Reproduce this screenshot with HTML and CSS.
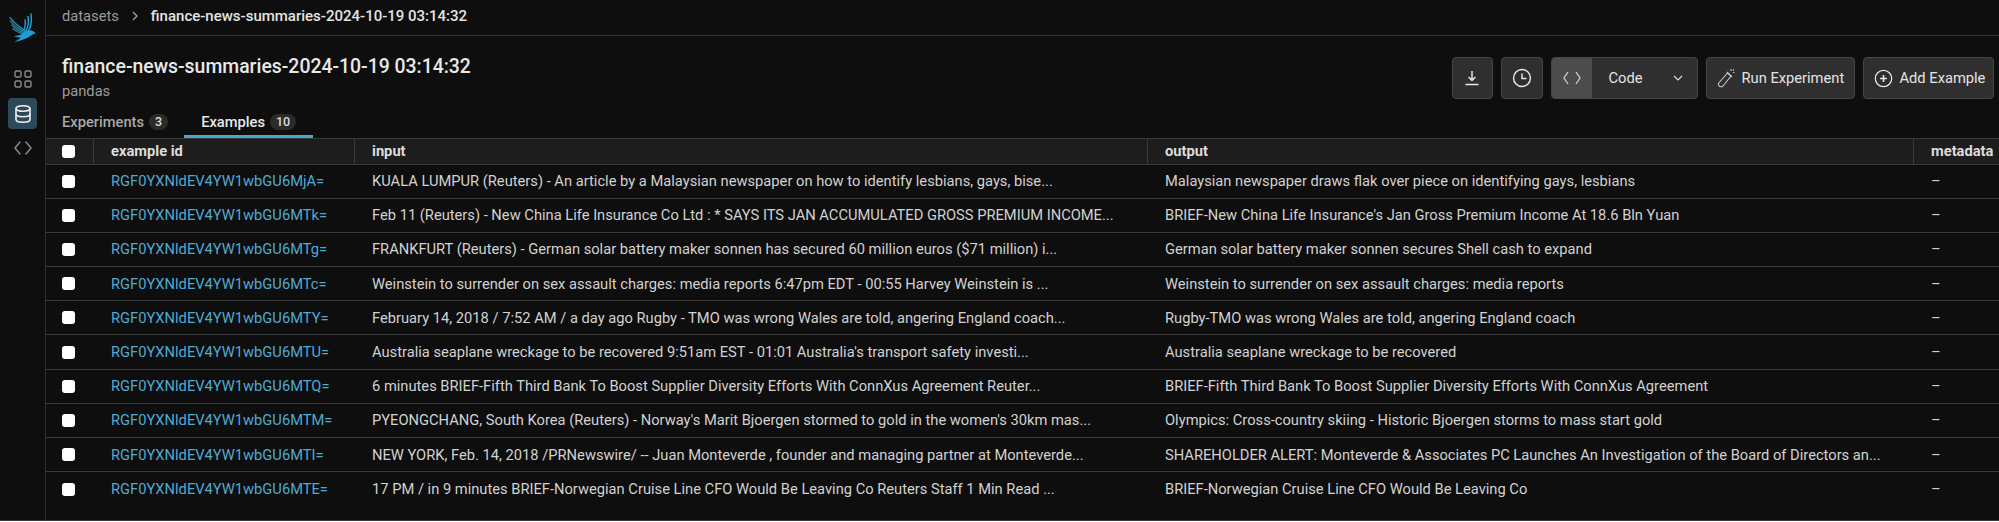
FILE: index.html
```html
<!DOCTYPE html>
<html lang="en">
<head>
<meta charset="utf-8">
<title>finance-news-summaries</title>
<link rel="stylesheet" href="styles.css">
</head>
<body>
<div class="app">
  <nav class="sidebar">
    <svg class="logo" width="28" height="30" viewBox="0 0 28 30" fill="none" stroke-linecap="round">
      <g stroke="#2b86a6" stroke-width="1.300">
        <path d="M1 4.500C5 10 10 14 17 18"/>
        <path d="M1.500 8C5 13 10 16 17 19.500"/>
        <path d="M3 12C6 16 11 18.500 17 20.500"/>
        <path d="M4 16C8 19 12 20.500 17 22"/>
      </g>
      <g stroke="#1c9fd8" stroke-width="1.500">
        <path d="M22 1C23 8 22 14 19 19"/>
        <path d="M19 3.500C20 9 19 14 17 18"/>
        <path d="M16 7C17 11 16 14 15 17"/>
      </g>
      <path d="M17 18C21 16.500 24 17.500 27 20.500C24 20.500 22.500 22.500 20 24C15 26.500 10 28 5 29.500C8 27.500 10 26 12 24.500C9 24.500 7 24 5 23C9 23 13 22 17 18Z" fill="#1c9fd8"/>
    </svg>
    <svg class="nav-icon first" width="20" height="20" viewBox="0 0 20 20" fill="none" stroke="#8a8a8a" stroke-width="1.400"><rect x="2" y="2" width="6" height="6" rx="1.500"/><rect x="12" y="2" width="6" height="6" rx="1.500"/><rect x="2" y="12" width="6" height="6" rx="1.500"/><rect x="12" y="12" width="6" height="6" rx="1.500"/></svg>
    <span class="nav-active">
      <svg width="20" height="20" viewBox="0 0 20 20" fill="none" stroke="#f0f0f0" stroke-width="1.600"><ellipse cx="10" cy="4.500" rx="7" ry="2.700"/><path d="M3 4.500V15.500C3 17 6 18.200 10 18.200S17 17 17 15.500V4.500"/><path d="M3 10C3 11.500 6 12.700 10 12.700S17 11.500 17 10"/></svg>
    </span>
    <svg class="nav-icon" width="20" height="20" viewBox="0 0 20 20" fill="none" stroke="#8a8a8a" stroke-width="1.500" stroke-linecap="round" stroke-linejoin="round"><path d="M7 4L2 10L7 16"/><path d="M13 4L18 10L13 16"/></svg>
  </nav>
  <main class="main">
    <header class="crumbs"><span class="crumb">datasets</span><svg width="10" height="12" viewBox="0 0 10 12" fill="none" stroke="#aaa" stroke-width="1.200"><path d="M3 2L7 6L3 10"/></svg><span class="crumb-current">finance-news-summaries-2024-10-19 03:14:32</span></header>
    <section class="head">
      <div class="head-text">
        <h1 class="title">finance-news-summaries-2024-10-19 03:14:32</h1>
        <div class="sub">pandas</div>
      </div>
      <div class="actions">
        <button class="btn icon-btn"><svg width="18" height="18" viewBox="0 0 18 18" fill="none" stroke="#e8e8e8" stroke-width="1.500"><path d="M9 2V11M5.500 8L9 11.500L12.500 8"/><path d="M2.500 15.500H15.500"/></svg></button>
        <button class="btn icon-btn"><svg width="20" height="20" viewBox="0 0 18 18" fill="none" stroke="#e8e8e8" stroke-width="1.300"><circle cx="9" cy="9" r="7.600"/><path d="M9 5V9.500H13"/></svg></button>
        <div class="btn code-btn">
          <span class="code-icon"><svg width="20" height="16" viewBox="0 0 20 16" fill="none" stroke="#d0d0d0" stroke-width="1.300"><path d="M6 2L2 8L6 14"/><path d="M14 2L18 8L14 14"/></svg></span>
          <span class="code-label">Code</span>
          <svg class="chev" width="10" height="8" viewBox="0 0 10 8" fill="none" stroke="#ddd" stroke-width="1.200"><path d="M1 2L5 6L9 2"/></svg>
        </div>
        <button class="btn text-btn run"><svg width="18" height="20" viewBox="0 0 18 20" fill="none" stroke="#c8c8c8" stroke-width="1.100"><path d="M10.500 5L14 8L6 18C5 19 3 19 2 17.800C1.200 16.800 1.300 15.500 2.200 14.500Z"/><path d="M10 4L15 9M14 3V1M16 4.500H17.500M16 2.500L17 1.500"/></svg>Run Experiment</button>
        <button class="btn text-btn add"><svg width="19" height="19" viewBox="0 0 18 18" fill="none" stroke="#e8e8e8" stroke-width="1.200"><circle cx="9" cy="9" r="7.800"/><path d="M9 5.800V12.200M5.800 9H12.200" stroke-width="1.500"/></svg>Add Example</button>
      </div>
    </section>
    <div class="tabs">
      <div class="tab">Experiments <span class="count">3</span></div>
      <div class="tab active">Examples <span class="count">10</span></div>
    </div>
    <div class="table">
      <div class="row header">
        <div class="cell c-check"><span class="check"></span></div>
        <div class="cell c-id">example id</div>
        <div class="cell c-input">input</div>
        <div class="cell c-output">output</div>
        <div class="cell c-meta">metadata</div>
      </div>
      <div class="row"><div class="cell c-check"><span class="check"></span></div><div class="cell c-id link">RGF0YXNldEV4YW1wbGU6MjA=</div><div class="cell c-input">KUALA LUMPUR (Reuters) - An article by a Malaysian newspaper on how to identify lesbians, gays, bise...</div><div class="cell c-output">Malaysian newspaper draws flak over piece on identifying gays, lesbians</div><div class="cell c-meta">–</div></div>
      <div class="row"><div class="cell c-check"><span class="check"></span></div><div class="cell c-id link">RGF0YXNldEV4YW1wbGU6MTk=</div><div class="cell c-input">Feb 11 (Reuters) - New China Life Insurance Co Ltd : * SAYS ITS JAN ACCUMULATED GROSS PREMIUM INCOME...</div><div class="cell c-output">BRIEF-New China Life Insurance's Jan Gross Premium Income At 18.6 Bln Yuan</div><div class="cell c-meta">–</div></div>
      <div class="row"><div class="cell c-check"><span class="check"></span></div><div class="cell c-id link">RGF0YXNldEV4YW1wbGU6MTg=</div><div class="cell c-input">FRANKFURT (Reuters) - German solar battery maker sonnen has secured 60 million euros ($71 million) i...</div><div class="cell c-output">German solar battery maker sonnen secures Shell cash to expand</div><div class="cell c-meta">–</div></div>
      <div class="row"><div class="cell c-check"><span class="check"></span></div><div class="cell c-id link">RGF0YXNldEV4YW1wbGU6MTc=</div><div class="cell c-input">Weinstein to surrender on sex assault charges: media reports 6:47pm EDT - 00:55 Harvey Weinstein is ...</div><div class="cell c-output">Weinstein to surrender on sex assault charges: media reports</div><div class="cell c-meta">–</div></div>
      <div class="row"><div class="cell c-check"><span class="check"></span></div><div class="cell c-id link">RGF0YXNldEV4YW1wbGU6MTY=</div><div class="cell c-input">February 14, 2018 / 7:52 AM / a day ago Rugby - TMO was wrong Wales are told, angering England coach...</div><div class="cell c-output">Rugby-TMO was wrong Wales are told, angering England coach</div><div class="cell c-meta">–</div></div>
      <div class="row"><div class="cell c-check"><span class="check"></span></div><div class="cell c-id link">RGF0YXNldEV4YW1wbGU6MTU=</div><div class="cell c-input">Australia seaplane wreckage to be recovered 9:51am EST - 01:01 Australia's transport safety investi...</div><div class="cell c-output">Australia seaplane wreckage to be recovered</div><div class="cell c-meta">–</div></div>
      <div class="row"><div class="cell c-check"><span class="check"></span></div><div class="cell c-id link">RGF0YXNldEV4YW1wbGU6MTQ=</div><div class="cell c-input">6 minutes BRIEF-Fifth Third Bank To Boost Supplier Diversity Efforts With ConnXus Agreement Reuter...</div><div class="cell c-output">BRIEF-Fifth Third Bank To Boost Supplier Diversity Efforts With ConnXus Agreement</div><div class="cell c-meta">–</div></div>
      <div class="row"><div class="cell c-check"><span class="check"></span></div><div class="cell c-id link">RGF0YXNldEV4YW1wbGU6MTM=</div><div class="cell c-input">PYEONGCHANG, South Korea (Reuters) - Norway's Marit Bjoergen stormed to gold in the women's 30km mas...</div><div class="cell c-output">Olympics: Cross-country skiing - Historic Bjoergen storms to mass start gold</div><div class="cell c-meta">–</div></div>
      <div class="row"><div class="cell c-check"><span class="check"></span></div><div class="cell c-id link">RGF0YXNldEV4YW1wbGU6MTI=</div><div class="cell c-input">NEW YORK, Feb. 14, 2018 /PRNewswire/ -- Juan Monteverde , founder and managing partner at Monteverde...</div><div class="cell c-output">SHAREHOLDER ALERT: Monteverde &amp; Associates PC Launches An Investigation of the Board of Directors an...</div><div class="cell c-meta">–</div></div>
      <div class="row last"><div class="cell c-check"><span class="check"></span></div><div class="cell c-id link">RGF0YXNldEV4YW1wbGU6MTE=</div><div class="cell c-input">17 PM / in 9 minutes BRIEF-Norwegian Cruise Line CFO Would Be Leaving Co Reuters Staff 1 Min Read ...</div><div class="cell c-output">BRIEF-Norwegian Cruise Line CFO Would Be Leaving Co</div><div class="cell c-meta">–</div></div>
    </div>
  </main>
</div>
</body>
</html>
```
FILE: styles.css
```css
* { box-sizing: border-box; }
html, body { margin: 0; padding: 0; background: #fff; }
body { font-family: Roboto, "Liberation Sans", sans-serif; color: #d2d2d2; overflow: hidden; }
.app { display: flex; height: 521px; background: #0e0e0e; border-bottom: 1px solid #3c3c3c; }
.sidebar { width: 46px; flex: none; border-right: 1px solid #2e2e2e; display: flex; flex-direction: column; align-items: center; padding-top: 13px; }
.nav-icon.first { margin-top: 26px; }
.nav-active { width: 29px; height: 31px; margin: 9px 0; background: #2c4a59; border-radius: 4px; display: flex; align-items: center; justify-content: center; }
.main { flex: 1; min-width: 0; display: flex; flex-direction: column; }
.crumbs { height: 36px; border-bottom: 1px solid #333; display: flex; align-items: center; padding: 0 0 4px 16px; gap: 11px; font-size: 14.700px; }
.crumb { color: #9c9c9c; }
.crumb-current { color: #e4e4e4; font-weight: 500; font-size: 15px; }
.head { display: flex; justify-content: space-between; height: 67px; padding: 0 5px 0 16px; }
.title { margin: 20px 0 0; font-size: 19.400px; line-height: 22px; font-weight: 500; color: #e8e8e8; }
.sub { font-size: 14.700px; color: #9c9c9c; margin-top: 5px; line-height: 16px; }
.actions { display: flex; gap: 8px; margin-top: 21px; align-items: flex-start; }
.btn { height: 42px; background: #2f2f2f; border: 1px solid #464646; border-radius: 4px; color: #e4e4e4; font: 400 14.700px Roboto, "Liberation Sans", sans-serif; display: flex; align-items: center; padding: 0; }
.icon-btn { width: 41.500px; justify-content: center; }
.code-btn { width: 147px; overflow: hidden; }
.code-icon { width: 40px; height: 100%; background: #4c4c4c; display: flex; align-items: center; justify-content: center; }
.code-label { margin-left: 17px; flex: 1; }
.chev { margin-right: 14px; }
.text-btn { padding: 0 0 0 10px; gap: 7px; white-space: nowrap; }
.run { width: 149px; }
.add { width: 131.500px; }
.tabs { display: flex; height: 35px; padding-left: 16px; gap: 33px; font-size: 14.700px; }
.tab { color: #a8a8a8; font-weight: 500; display: flex; align-items: center; gap: 5px; height: 35px; padding-top: 2px; }
.tab.active { color: #e8e8e8; border-bottom: 3px solid #49a5cb; padding: 5px 17px 0; margin-left: -17px; }
.count { display: inline-flex; align-items: center; justify-content: center; min-width: 18px; padding: 0 6px; height: 16px; background: #2b2b2b; border-radius: 8px; font-size: 12.500px; color: #dcdcdc; }
.table { border-top: 1px solid #3a3a3a; font-size: 14.700px; }
.row { display: flex; height: 34.200px; border-bottom: 1px solid #3a3a3a; align-items: stretch; }
.row.last { border-bottom: none; }
.row.header { height: 25.500px; background: #1d1d1d; font-weight: 700; color: #dcdcdc; }
.cell { display: flex; align-items: center; padding-left: 17px; white-space: nowrap; overflow: hidden; }
.header .cell + .cell { border-left: 1px solid #3a3a3a; }
.row:not(.header) .cell + .cell { border-left: 1px solid transparent; }
.c-check { width: 47px; flex: none; padding-left: 16px; }
.c-id { width: 261px; flex: none; }
.c-input { width: 793px; flex: none; }
.c-output { width: 766px; flex: none; }
.c-meta { flex: 1; }
.link { color: #4fabd4; }
.check { width: 13px; height: 13px; border-radius: 3px; background: #fff; display: block; }
```
